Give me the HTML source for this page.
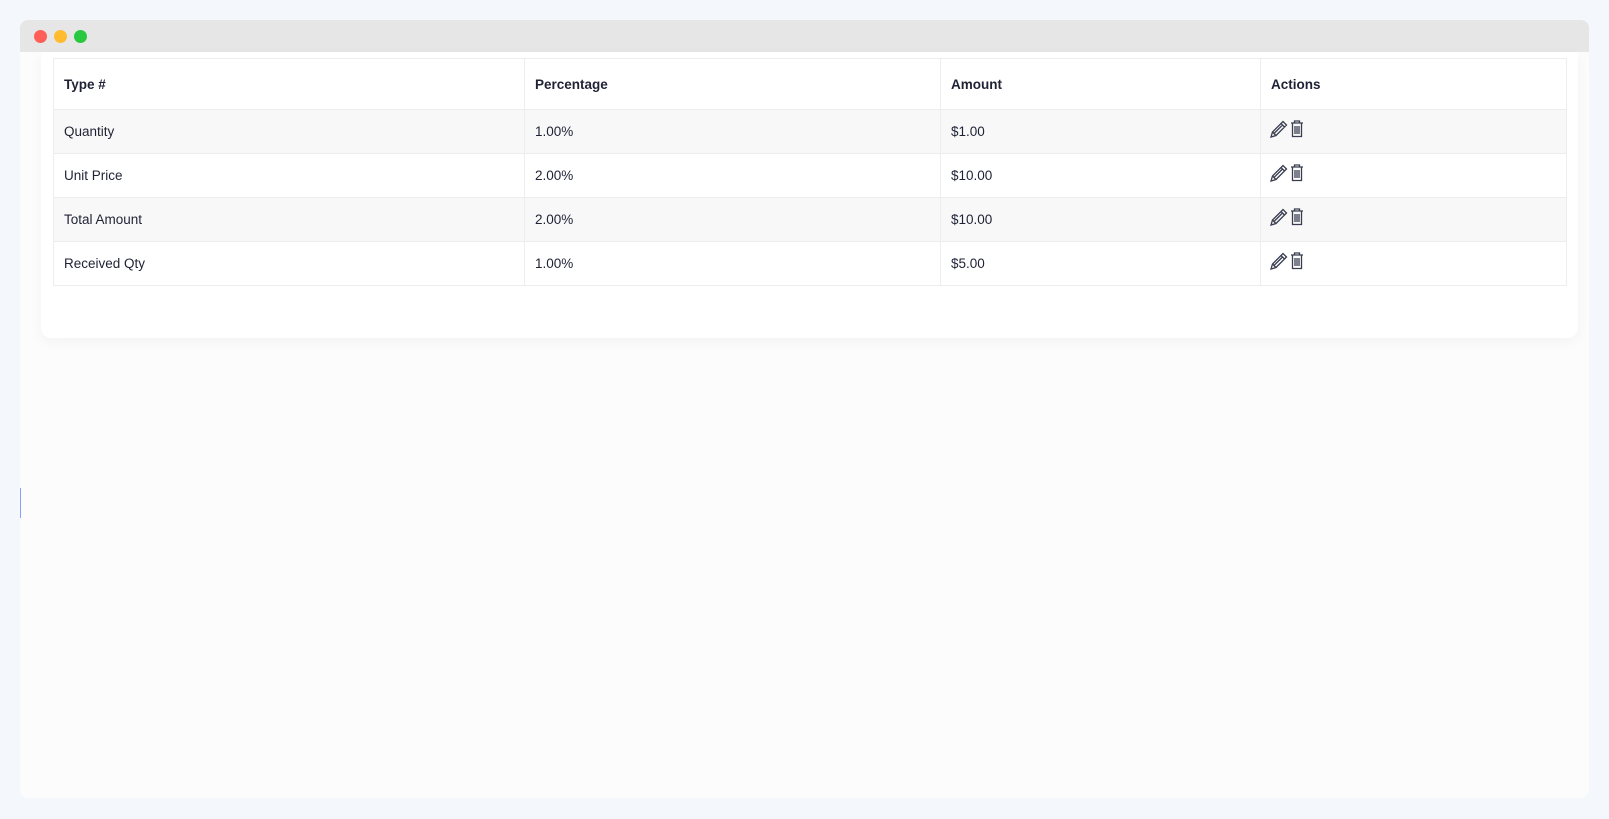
<!DOCTYPE html>
<html><head><style>
html,body{margin:0;padding:0;width:1609px;height:819px;overflow:hidden;background:#f4f7fb;font-family:"Liberation Sans",sans-serif;color:#1f2235}
.win{position:absolute;left:20px;top:20px;width:1569px;height:778px;background:#fcfcfc;border-radius:8px;overflow:hidden}
.bar{height:32px;background:#e6e6e6;position:relative}
.dot{position:absolute;top:10px;width:13px;height:13px;border-radius:50%}
.card{position:absolute;left:21px;top:32px;width:1537px;height:286px;background:#fff;border-radius:0 0 10px 10px;box-shadow:0 4px 14px rgba(0,0,0,0.04)}
table{position:absolute;left:12px;top:6px;width:1514px;border-collapse:collapse;font-size:13.5px}
td,th{border:1px solid #ededed;text-align:left;padding:0 0 0 10px}
th{height:50px;font-weight:bold}
td{height:43px}
tr.g td{background:#f8f8f8}
</style></head><body>
<div class="win">
<div class="bar">
<div class="dot" style="left:14px;background:#fe5f57"></div>
<div class="dot" style="left:34px;background:#febc2e"></div>
<div class="dot" style="left:54px;background:#28c840"></div>
</div>
<div class="card">
<table>
<tr><th style="width:460px">Type #</th><th style="width:405px">Percentage</th><th style="width:309px">Amount</th><th>Actions</th></tr>
<tr class="g"><td>Quantity</td><td>1.00%</td><td>$1.00</td><td>ICON</td></tr>
<tr><td>Unit Price</td><td>2.00%</td><td>$10.00</td><td>ICON</td></tr>
<tr class="g"><td>Total Amount</td><td>2.00%</td><td>$10.00</td><td>ICON</td></tr>
<tr><td>Received Qty</td><td>1.00%</td><td>$5.00</td><td>ICON</td></tr>
</table>
</div>
</div>
<div style="position:absolute;left:20px;top:488px;width:1px;height:30px;background:#8aa0ff"></div>
<script>
var ic='<svg width="40" height="20" viewBox="0 0 40 20" style="vertical-align:middle;margin-top:-6px;margin-left:-2px" fill="none" stroke="#3a3d4f" stroke-width="1.3"><path d="M2 18 L3.5 13 L14 2.5 L17.5 6 L7 16.5 Z M3.5 13 L7 16.5 M12 4.5 L15.5 8 M5 14.5 L13.5 6"/><path d="M22 4 H34 M25.5 4 V2 H30.5 V4 M23.5 4 V17.5 H32.5 V4 M26 7 V15 M28 7 V15 M30 7 V15"/></svg>';
document.querySelectorAll('td').forEach(function(t){if(t.textContent=='ICON')t.innerHTML=ic;});
</script>
</body></html>
